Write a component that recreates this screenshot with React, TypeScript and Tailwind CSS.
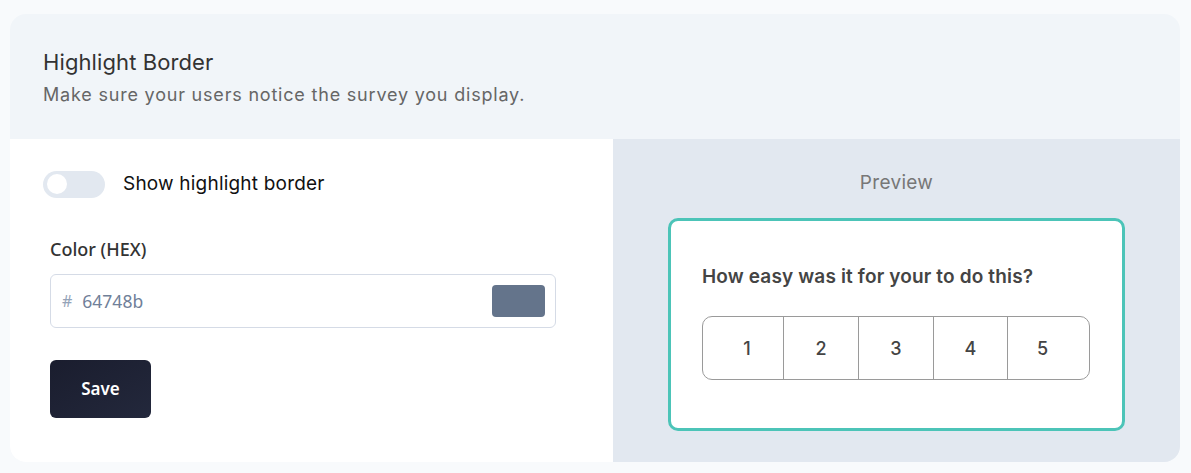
import type { ReactNode } from "react";

const SCALE = [
  { n: 1, w: "w-[80px]" },
  { n: 2, w: "w-[75px]" },
  { n: 3, w: "w-[75px]" },
  { n: 4, w: "w-[74px]" },
  { n: 5, w: "flex-1" },
];

function Toggle() {
  return (
    <div className="flex h-[27px] w-[62px] items-center rounded-full bg-[#e2e8f0] px-[4px]">
      <span className="h-[20px] w-[20px] rounded-full bg-white" />
    </div>
  );
}

function PreviewCard(): ReactNode {
  return (
    <div className="h-[213px] w-[457px] rounded-[10px] border-[3px] border-[#4cc4b8] bg-white px-[31px] pt-[44px]">
      <p className="text-[19px] font-semibold leading-[24px] tracking-[0.15px] text-[#444]">
        How easy was it for your to do this?
      </p>
      <div className="mt-[27px] flex h-[64px] w-[388px] rounded-[10px] border border-[#9a9a9a]">
        {SCALE.map((s, i) => (
          <div
            key={s.n}
            className={`${s.w} flex items-center justify-center text-[18px] font-medium text-[#444] ${i > 0 ? "border-l border-[#9a9a9a]" : ""} ${i === 0 ? "pl-[8px]" : ""} ${i === 4 ? "pr-[12px]" : ""}`}
          >
            {s.n}
          </div>
        ))}
      </div>
    </div>
  );
}

export default function App() {
  return (
    <div className="min-h-[473px] bg-[#f8fafc] pt-[14px] pl-[10px] font-['Inter',sans-serif]">
      <div className="flex h-[448px] w-[1170px] flex-col overflow-hidden rounded-[16px] bg-[#f1f5f9]">
        <div className="h-[125px] shrink-0 px-[33px] pt-[34px]">
          <h1 className="text-[22px] leading-[28px] tracking-[0.1px] text-[#333]">Highlight Border</h1>
          <p className="mt-[7px] text-[18px] leading-[24px] tracking-[0.8px] text-[#666]">
            Make sure your users notice the survey you display.
          </p>
        </div>

        <div className="flex flex-1">
          <div className="w-[603px] bg-white pt-[31px] pl-[33px]">
            <div className="flex items-center gap-[18px]">
              <Toggle />
              <span className="text-[19px] leading-[28px] tracking-[0.2px] text-[#111]">Show highlight border</span>
            </div>

            <div className="pl-[7px] font-['Noto_Sans',sans-serif]">
              <label className="mt-[39px] block text-[18px] font-medium leading-[24px] text-[#333]">
                Color (HEX)
              </label>
              <div className="mt-[13px] flex h-[54px] w-[506px] items-center rounded-[6px] border border-[#d5dbe6] pr-[10px] pl-[11px]">
                <span className="text-[16px] text-[#94a3b8]">#</span>
                <span className="ml-[10px] text-[17.5px] text-[#708099]">64748b</span>
                <div className="flex-1" />
                <div className="h-[32px] w-[53px] rounded-[4px] bg-[#64748b]" />
              </div>
              <button className="mt-[32px] flex h-[58px] w-[101px] items-center justify-center rounded-[6px] bg-gradient-to-br from-[#1a1d2e] to-[#23283c] text-[17px] font-semibold text-white">
                Save
              </button>
            </div>
          </div>

          <div className="flex flex-1 flex-col items-center bg-[#e2e8f0] pt-[30px]">
            <p className="text-[19px] leading-[28px] tracking-[0.3px] text-[#777]">Preview</p>
            <div className="mt-[21px]">
              <PreviewCard />
            </div>
          </div>
        </div>
      </div>
    </div>
  );
}
